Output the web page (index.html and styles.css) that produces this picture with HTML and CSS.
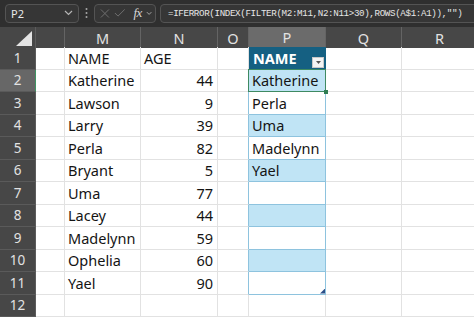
FILE: index.html
```html
<!DOCTYPE html>
<html lang="en">
<head>
    <meta charset="UTF-8">
    <title>Sheet - FILTER</title>
    <link rel="stylesheet" href="styles.css">
</head>
<body>
    <div class="formula-bar">
        <div class="name-box">
            <span>P2</span>
            <svg width="9" height="6" viewBox="0 0 9 6"><path d="M1 1 L4.5 4.5 L8 1" fill="none" stroke="#b5b5b5" stroke-width="1.2"/></svg>
        </div>
        <div class="grip">
            <svg width="3" height="12" viewBox="0 0 3 12"><circle cx="1.5" cy="2" r="1" fill="#a8a8a8"/><circle cx="1.5" cy="6" r="1" fill="#a8a8a8"/><circle cx="1.5" cy="10" r="1" fill="#a8a8a8"/></svg>
        </div>
        <div class="fx-box">
            <svg width="11" height="11" viewBox="0 0 11 11"><path d="M1 1 L10 10 M10 1 L1 10" stroke="#707070" stroke-width="1.1"/></svg>
            <svg width="13" height="10" viewBox="0 0 13 10"><path d="M1 5 L4.5 8.5 L12 1" fill="none" stroke="#707070" stroke-width="1.1"/></svg>
            <span class="fx">fx</span>
            <svg width="7" height="5" viewBox="0 0 7 5"><path d="M1 1 L3.5 3.5 L6 1" fill="none" stroke="#b5b5b5" stroke-width="1"/></svg>
        </div>
        <div class="formula">=IFERROR(INDEX(FILTER(M2:M11,N2:N11&gt;30),ROWS(A$1:A1)),"")</div>
    </div>

    <div class="sheet">
        <div class="row head-row">
            <div class="corner"><div class="corner-tri"></div></div>
            <div class="ch"></div>
            <div class="ch">M</div>
            <div class="ch">N</div>
            <div class="ch">O</div>
            <div class="ch ch-sel">P</div>
            <div class="ch">Q</div>
            <div class="ch">R</div>
        </div>

        <div class="row">
            <div class="rh">1</div><div class="c"></div>
            <div class="c">NAME</div><div class="c">AGE</div><div class="c"></div>
            <div class="c th"><span>NAME</span><span class="filter-btn"><svg width="5" height="3" viewBox="0 0 5 3"><path d="M0 0 H5 L2.5 3 Z" fill="#555"/></svg></span></div>
            <div class="c"></div><div class="c"></div>
        </div>
        <div class="row">
            <div class="rh rh-sel">2</div><div class="c"></div>
            <div class="c">Katherine</div><div class="c num">44</div><div class="c edge"></div>
            <div class="c t band sel">Katherine<span class="fill-handle"></span></div>
            <div class="c"></div><div class="c"></div>
        </div>
        <div class="row">
            <div class="rh">3</div><div class="c"></div>
            <div class="c">Lawson</div><div class="c num">9</div><div class="c edge"></div>
            <div class="c t">Perla</div>
            <div class="c"></div><div class="c"></div>
        </div>
        <div class="row">
            <div class="rh">4</div><div class="c"></div>
            <div class="c">Larry</div><div class="c num">39</div><div class="c edge"></div>
            <div class="c t band">Uma</div>
            <div class="c"></div><div class="c"></div>
        </div>
        <div class="row">
            <div class="rh">5</div><div class="c"></div>
            <div class="c">Perla</div><div class="c num">82</div><div class="c edge"></div>
            <div class="c t">Madelynn</div>
            <div class="c"></div><div class="c"></div>
        </div>
        <div class="row">
            <div class="rh">6</div><div class="c"></div>
            <div class="c">Bryant</div><div class="c num">5</div><div class="c edge"></div>
            <div class="c t band">Yael</div>
            <div class="c"></div><div class="c"></div>
        </div>
        <div class="row">
            <div class="rh">7</div><div class="c"></div>
            <div class="c">Uma</div><div class="c num">77</div><div class="c edge"></div>
            <div class="c t"></div>
            <div class="c"></div><div class="c"></div>
        </div>
        <div class="row">
            <div class="rh">8</div><div class="c"></div>
            <div class="c">Lacey</div><div class="c num">44</div><div class="c edge"></div>
            <div class="c t band"></div>
            <div class="c"></div><div class="c"></div>
        </div>
        <div class="row">
            <div class="rh">9</div><div class="c"></div>
            <div class="c">Madelynn</div><div class="c num">59</div><div class="c edge"></div>
            <div class="c t"></div>
            <div class="c"></div><div class="c"></div>
        </div>
        <div class="row">
            <div class="rh">10</div><div class="c"></div>
            <div class="c">Ophelia</div><div class="c num">60</div><div class="c edge"></div>
            <div class="c t band"></div>
            <div class="c"></div><div class="c"></div>
        </div>
        <div class="row">
            <div class="rh">11</div><div class="c"></div>
            <div class="c">Yael</div><div class="c num">90</div><div class="c edge"></div>
            <div class="c t">
                <span class="resize-handle"></span>
            </div>
            <div class="c"></div><div class="c"></div>
        </div>
        <div class="row">
            <div class="rh">12</div><div class="c"></div>
            <div class="c"></div><div class="c"></div><div class="c"></div>
            <div class="c"></div>
            <div class="c"></div><div class="c"></div>
        </div>
    </div>
</body>
</html>
```

FILE: styles.css
```css
/* Reset */
* {
    margin: 0;
    padding: 0;
    box-sizing: border-box;
}

body {
    width: 474px;
    height: 317px;
    overflow: hidden;
    background-color: #ffffff;
    font-family: 'Noto Sans', 'Open Sans', sans-serif;
}

/* Formula bar */
.formula-bar {
    display: flex;
    align-items: center;
    height: 27px;
    padding: 0 0 1px 5px;
    background-color: #2f2f2f;
    white-space: nowrap;
}

.name-box,
.fx-box,
.formula {
    display: flex;
    align-items: center;
    height: 19px;
    background-color: #363636;
    border: 1px solid #545454;
    border-radius: 4px;
}

.name-box {
    width: 74px;
    justify-content: space-between;
    padding: 0 5px 0 5px;
    color: #e8e8e8;
    font-size: 11px;
}

.grip {
    display: flex;
    align-items: center;
    width: 15px;
    justify-content: center;
}

.fx-box {
    width: 62px;
    gap: 4px;
    padding: 0 3px 0 5px;
}

.fx-box .fx {
    color: #d8d8d8;
    font-family: 'Liberation Serif', serif;
    font-style: italic;
    font-size: 13px;
    margin-left: 4px;
    letter-spacing: -0.5px;
}

.formula {
    flex: 1;
    margin-left: 4px;
    margin-right: -6px;
    padding-left: 7px;
    color: #e6e6e6;
    font-family: 'Liberation Mono', monospace;
    font-size: 9.2px;
    letter-spacing: -0.35px;
}

/* Grid */
.row {
    display: grid;
    grid-template-columns: 36px 29px 76px 77px 31px 77px 76px 76px;
    height: 22.5px;
    width: 478px;
}

.head-row {
    height: 20px;
}

.corner,
.ch,
.rh {
    background-color: #474747;
    color: #e2e2e2;
}

.corner {
    display: flex;
    align-items: flex-end;
    justify-content: flex-end;
    padding: 0 3px 2px 0;
    border-right: 1px solid #5c5c5c;
}

.corner-tri {
    width: 16px;
    height: 15px;
    background-color: #e4e4e4;
    clip-path: polygon(100% 0, 100% 100%, 0 100%);
}

.ch {
    display: flex;
    align-items: center;
    justify-content: center;
    font-size: 14.5px;
    border-right: 1px solid #646464;
}

.ch-sel {
    background-color: #6b6b6b;
    border-bottom: 1px solid #4f9a6c;
}

.rh {
    display: flex;
    align-items: center;
    justify-content: center;
    font-size: 13.5px;
    border-right: 1px solid #5c5c5c;
    border-bottom: 1px solid #5a5a5a;
}

.rh-sel {
    background-color: #676767;
    border-right: 1px solid #3f9463;
}

.c {
    display: flex;
    align-items: center;
    padding: 0 3px;
    font-size: 14.5px;
    color: #141414;
    border-right: 1px solid #e2e2e2;
    border-bottom: 1px solid #e2e2e2;
    white-space: nowrap;
    overflow: hidden;
}

.num {
    justify-content: flex-end;
    padding-right: 4px;
}

/* Table in P */
.edge {
    border-right-color: #8ec3de;
}

.t {
    position: relative;
    overflow: visible;
    border-right-color: #8ec3de;
    border-bottom-color: #8ec3de;
}

.band {
    background-color: #c0e4f5;
}

.th {
    justify-content: space-between;
    align-items: stretch;
    padding: 0 1px 0 4px;
    background-color: #156082;
    border-right-color: #156082;
    border-bottom-color: #156082;
    color: #ffffff;
    font-weight: bold;
}

.th span:first-child {
    display: flex;
    align-items: center;
}

.filter-btn {
    display: flex;
    align-items: center;
    justify-content: center;
    align-self: flex-end;
    width: 12px;
    height: 11px;
    margin-bottom: 1px;
    background-color: #f4f4f4;
    border: 1px solid #c8c8c8;
}

.sel::after {
    content: "";
    position: absolute;
    top: -1px;
    left: -1px;
    right: -1px;
    bottom: -1px;
    border: 1px solid #3f8a62;
    pointer-events: none;
}

.fill-handle {
    position: absolute;
    right: -3px;
    bottom: -3px;
    width: 4px;
    height: 4px;
    background-color: #2f7d52;
    z-index: 2;
}

.resize-handle {
    position: absolute;
    right: 0;
    bottom: 0;
    width: 5px;
    height: 5px;
    background-color: #2c4f88;
    clip-path: polygon(100% 0, 100% 100%, 0 100%);
}
```
